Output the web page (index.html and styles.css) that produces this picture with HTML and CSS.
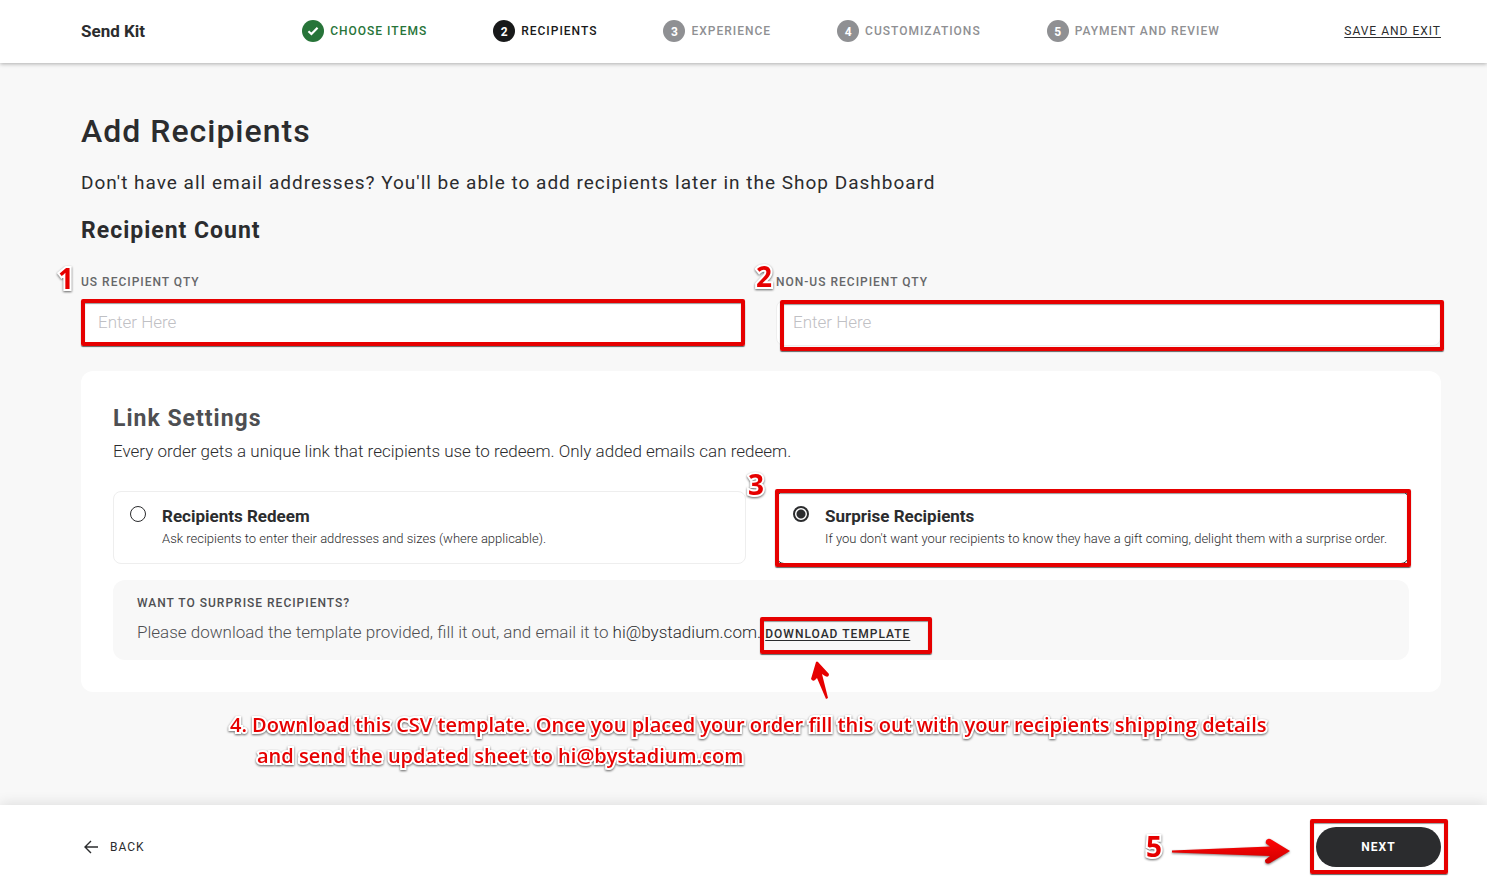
FILE: index.html
```html
<!DOCTYPE html>
<html lang="en">
<head>
<meta charset="utf-8">
<meta name="viewport" content="width=device-width, initial-scale=1">
<title>Send Kit - Add Recipients</title>
<link rel="stylesheet" href="styles.css">
</head>
<body>
<header class="topbar">
  <div class="brand">Send Kit</div>
  <ol class="steps">
    <li class="step step-done"><span class="dot"><svg width="12" height="10" viewBox="0 0 10 8" aria-hidden="true"><path d="M1.2 4.2 3.7 6.5 8.8 1.2" fill="none" stroke="#fff" stroke-width="1.8"/></svg></span>CHOOSE ITEMS</li>
    <li class="step step-current"><span class="dot">2</span>RECIPIENTS</li>
    <li class="step"><span class="dot">3</span>EXPERIENCE</li>
    <li class="step"><span class="dot">4</span>CUSTOMIZATIONS</li>
    <li class="step"><span class="dot">5</span>PAYMENT AND REVIEW</li>
  </ol>
  <a class="save caps" href="#">SAVE AND EXIT</a>
</header>

<main class="content">
  <h1 class="title">Add Recipients</h1>
  <p class="lead">Don't have all email addresses? You'll be able to add recipients later in the Shop Dashboard</p>
  <h2 class="subtitle">Recipient Count</h2>

  <div class="fields">
    <div class="field">
      <label class="field-label caps" for="us-qty">US RECIPIENT QTY</label>
      <div class="field-box">
        <input class="field-input" id="us-qty" type="text" placeholder="Enter Here">
        <span class="frame frame-us"></span>
      </div>
      <span class="mark mark-1">1</span>
    </div>
    <div class="field">
      <label class="field-label caps" for="intl-qty">NON-US RECIPIENT QTY</label>
      <div class="field-box">
        <input class="field-input" id="intl-qty" type="text" placeholder="Enter Here">
        <span class="frame frame-intl"></span>
      </div>
      <span class="mark mark-2">2</span>
    </div>
  </div>

  <section class="card">
    <h2 class="card-title">Link Settings</h2>
    <p class="card-text">Every order gets a unique link that recipients use to redeem. Only added emails can redeem.</p>
    <div class="options">
      <label class="option">
        <input class="radio" type="radio" name="mode">
        <span class="option-body">
          <span class="option-name">Recipients Redeem</span>
          <span class="option-hint">Ask recipients to enter their addresses and sizes (where applicable).</span>
        </span>
      </label>
      <label class="option option-selected">
        <input class="radio" type="radio" name="mode" checked>
        <span class="option-body">
          <span class="option-name">Surprise Recipients</span>
          <span class="option-hint">If you don't want your recipients to know they have a gift coming, delight them with a surprise order.</span>
        </span>
        <span class="frame frame-option"></span>
        <span class="mark mark-3">3</span>
      </label>
    </div>
    <div class="note">
      <h3 class="note-title caps">WANT TO SURPRISE RECIPIENTS?</h3>
      <p class="note-text">Please download the template provided, fill it out, and email it to <a class="mail" href="mailto:hi@bystadium.com">hi@bystadium.com.</a> <a class="download caps" href="#">DOWNLOAD TEMPLATE<span class="frame frame-download"></span><svg class="arrow-up" width="22" height="42" viewBox="0 0 22 42" aria-hidden="true"><path d="M6 1Q7 0 8 1L19 13Q19 17 15 15L12 13 18 37 16 38 7 17 5 19Q3 21 1 18Z" fill="#e60000"/></svg></a></p>
    </div>
  </section>

  <p class="callout">4. Download this CSV template. Once you placed your order fill this out with your recipients shipping details<br><span class="callout-next">and send the updated sheet to hi@bystadium.com</span></p>
</main>

<footer class="bottombar">
  <button class="back caps" type="button"><svg width="14" height="14" viewBox="0 0 14 14" aria-hidden="true"><path d="M14 7H1M7 1 1 7 7 13" fill="none" stroke="#2b2c2e" stroke-width="1.4"/></svg>BACK</button>
  <div class="forward">
    <button class="next caps" type="button">NEXT</button>
    <span class="frame frame-next"></span>
    <svg class="arrow-right" width="120" height="28" viewBox="0 0 120 28" aria-hidden="true"><defs><linearGradient id="red" x1="0" y1="0" x2="0" y2="1"><stop offset="0" stop-color="#ff0505"/><stop offset="1" stop-color="#d00000"/></linearGradient></defs><path d="M1 12.500 99 8.500 95 5.500Q94 2 97 1Q98 0 101 2L119 13 99 25Q94 27 94 22L99 18 1 14.500Z" fill="url(#red)"/></svg>
    <span class="mark mark-5">5</span>
  </div>
</footer>
</body>
</html>
```
FILE: styles.css
```css
* {
  box-sizing: border-box;
}

body {
  margin: 0;
  min-height: 100vh;
  display: flex;
  flex-direction: column;
  background: #f8f8f8;
  color: #2b2c2e;
  font-family: Roboto, "Liberation Sans", sans-serif;
  font-size: 17px;
  line-height: 24px;
}

h1, h2, h3, p, ol {
  margin: 0;
  padding: 0;
}

button, input {
  font: inherit;
}

.caps {
  font-size: 12px;
  line-height: 16px;
  letter-spacing: 1px;
}

/* Top bar */
.topbar {
  display: grid;
  grid-template-columns: 1fr auto 1fr;
  align-items: center;
  height: 63px;
  padding: 0 46px 2px 81px;
  background: #fff;
  box-shadow: 0 1px 4px rgba(0, 0, 0, 0.3);
}

.brand {
  font-weight: 700;
}

.steps {
  display: flex;
  gap: 66px;
  list-style: none;
}

.step {
  display: flex;
  align-items: center;
  gap: 6px;
  color: #8f9093;
  font-size: 12px;
  font-weight: 500;
  letter-spacing: 1px;
  white-space: nowrap;
}

.dot {
  display: grid;
  place-items: center;
  width: 22px;
  height: 22px;
  border-radius: 50%;
  background: #8f9093;
  color: #fff;
  font-weight: 700;
  letter-spacing: 0;
}

.step-done {
  color: #277439;
}

.step-done .dot {
  background: #277439;
}

.step-current {
  color: #18191a;
}

.step-current .dot {
  background: #18191a;
}

.save {
  justify-self: end;
  color: #2b2c2e;
  text-underline-offset: 2px;
}

/* Page content */
.content {
  flex: 1;
  padding: 48px 46px 32px 81px;
}

.title {
  font-size: 32px;
  line-height: 40px;
  font-weight: 500;
  letter-spacing: 1px;
}

.lead {
  margin-top: 16px;
  font-size: 19px;
  line-height: 32px;
  letter-spacing: 1px;
}

.subtitle {
  margin-top: 16px;
  font-size: 23px;
  line-height: 32px;
  font-weight: 700;
  letter-spacing: 1px;
}

.fields {
  display: grid;
  grid-template-columns: 1fr 1fr;
  gap: 30px;
  margin-top: 27px;
}

.field {
  position: relative;
}

.field-label {
  display: block;
  color: #666769;
  font-weight: 500;
}

.field-box {
  position: relative;
  margin-top: 10px;
}

.field-input {
  display: block;
  width: 100%;
  height: 46px;
  padding: 0 16px 2px;
  border: 1px solid #eee;
  border-radius: 8px;
  background: #fff;
  color: #2b2c2e;
  font-weight: 300;
}

.field-input::placeholder {
  color: #bfc0c4;
  opacity: 1;
}

.card {
  margin-top: 25px;
  padding: 32px;
  border-radius: 12px;
  background: #fff;
}

.card-title {
  color: #4e4f52;
  font-size: 23px;
  line-height: 32px;
  font-weight: 700;
  letter-spacing: 1px;
}

.card-text {
  margin-top: 4px;
  font-weight: 300;
}

.options {
  display: grid;
  grid-template-columns: 1fr 1fr;
  gap: 30px;
  margin-top: 28px;
}

.option {
  position: relative;
  display: flex;
  gap: 16px;
  padding: 12px 16px 16px;
  border: 1px solid #eee;
  border-radius: 8px;
}

.option-selected {
  border-color: #2b2c2e;
}

.radio {
  appearance: none;
  flex: none;
  width: 16px;
  height: 16px;
  margin: 2px 0 0;
  border: 1px solid #2b2c2e;
  border-radius: 50%;
  background: #fff;
}

.radio:checked {
  border-width: 2px;
  background: radial-gradient(circle, #2b2c2e 4px, #fff 5px);
}

.option-body {
  display: flex;
  flex-direction: column;
}

.option-name {
  font-weight: 700;
}

.option-hint {
  margin-top: 3px;
  font-size: 13px;
  line-height: 16px;
  font-weight: 300;
}

.note {
  margin-top: 16px;
  padding: 15px 24px 16px;
  border-radius: 12px;
  background: #f8f8f8;
}

.note-title {
  color: #4e4f52;
  font-weight: 500;
}

.note-text {
  margin-top: 9px;
  color: #4e4f52;
  font-weight: 300;
}

.mail {
  color: #2b2c2e;
  text-decoration: none;
}

.download {
  position: relative;
  color: #2b2c2e;
  font-weight: 500;
  text-underline-offset: 2px;
}

/* Bottom bar */
.bottombar {
  display: flex;
  align-items: center;
  justify-content: space-between;
  height: 83px;
  padding: 0 46px 0 81px;
  background: #fff;
  box-shadow: 0 -2px 12px rgba(0, 0, 0, 0.1);
}

.back {
  display: flex;
  align-items: center;
  gap: 12px;
  padding: 0 3px;
  border: 0;
  background: none;
  color: #2b2c2e;
}

.forward {
  position: relative;
}

.next {
  display: block;
  width: 125px;
  height: 40px;
  border: 0;
  border-radius: 20px;
  background: #2b2c2e;
  color: #fff;
  font-weight: 700;
}

/* Tutorial markup laid over the page */
.frame {
  position: absolute;
  border: 4px solid #e60000;
  border-radius: 2px;
  box-shadow: 0 1px 1px rgba(0, 0, 0, 0.6), inset 0 1px 1px rgba(0, 0, 0, 0.4);
  pointer-events: none;
}

.frame-us {
  inset: -1px 1px 0 0;
}

.frame-intl {
  inset: 0 -3px -5px 4px;
}

.frame-option {
  inset: -3px -3px -4px -2px;
}

.frame-download {
  inset: -10px -22px -13px -5px;
}

.frame-next {
  inset: -8px -7px -7px -6px;
}

.mark,
.callout {
  color: #e60000;
  font-family: "Open Sans", "Noto Sans", sans-serif;
  -webkit-text-stroke: 4px #fff;
  paint-order: stroke fill;
  filter: drop-shadow(0 1px 1px rgba(0, 0, 0, 0.6));
}

.mark {
  position: absolute;
  font-size: 28px;
  line-height: 32px;
  font-weight: 700;
}

.mark-1 {
  top: -12px;
  left: -23px;
}

.mark-2 {
  top: -14px;
  left: -20px;
}

.mark-3 {
  top: -24px;
  left: -29px;
}

.mark-5 {
  top: 3px;
  right: 279px;
}

.arrow-up {
  position: absolute;
  top: 34px;
  left: 45px;
}

.arrow-right {
  position: absolute;
  top: 11px;
  right: 150px;
  filter: drop-shadow(0 1px 1px rgba(0, 0, 0, 0.5));
}

.callout {
  margin-top: 17px;
  padding-left: 149px;
  font-size: 20px;
  line-height: 31px;
  font-weight: 600;
}

.callout-next {
  padding-left: 27px;
}
```
